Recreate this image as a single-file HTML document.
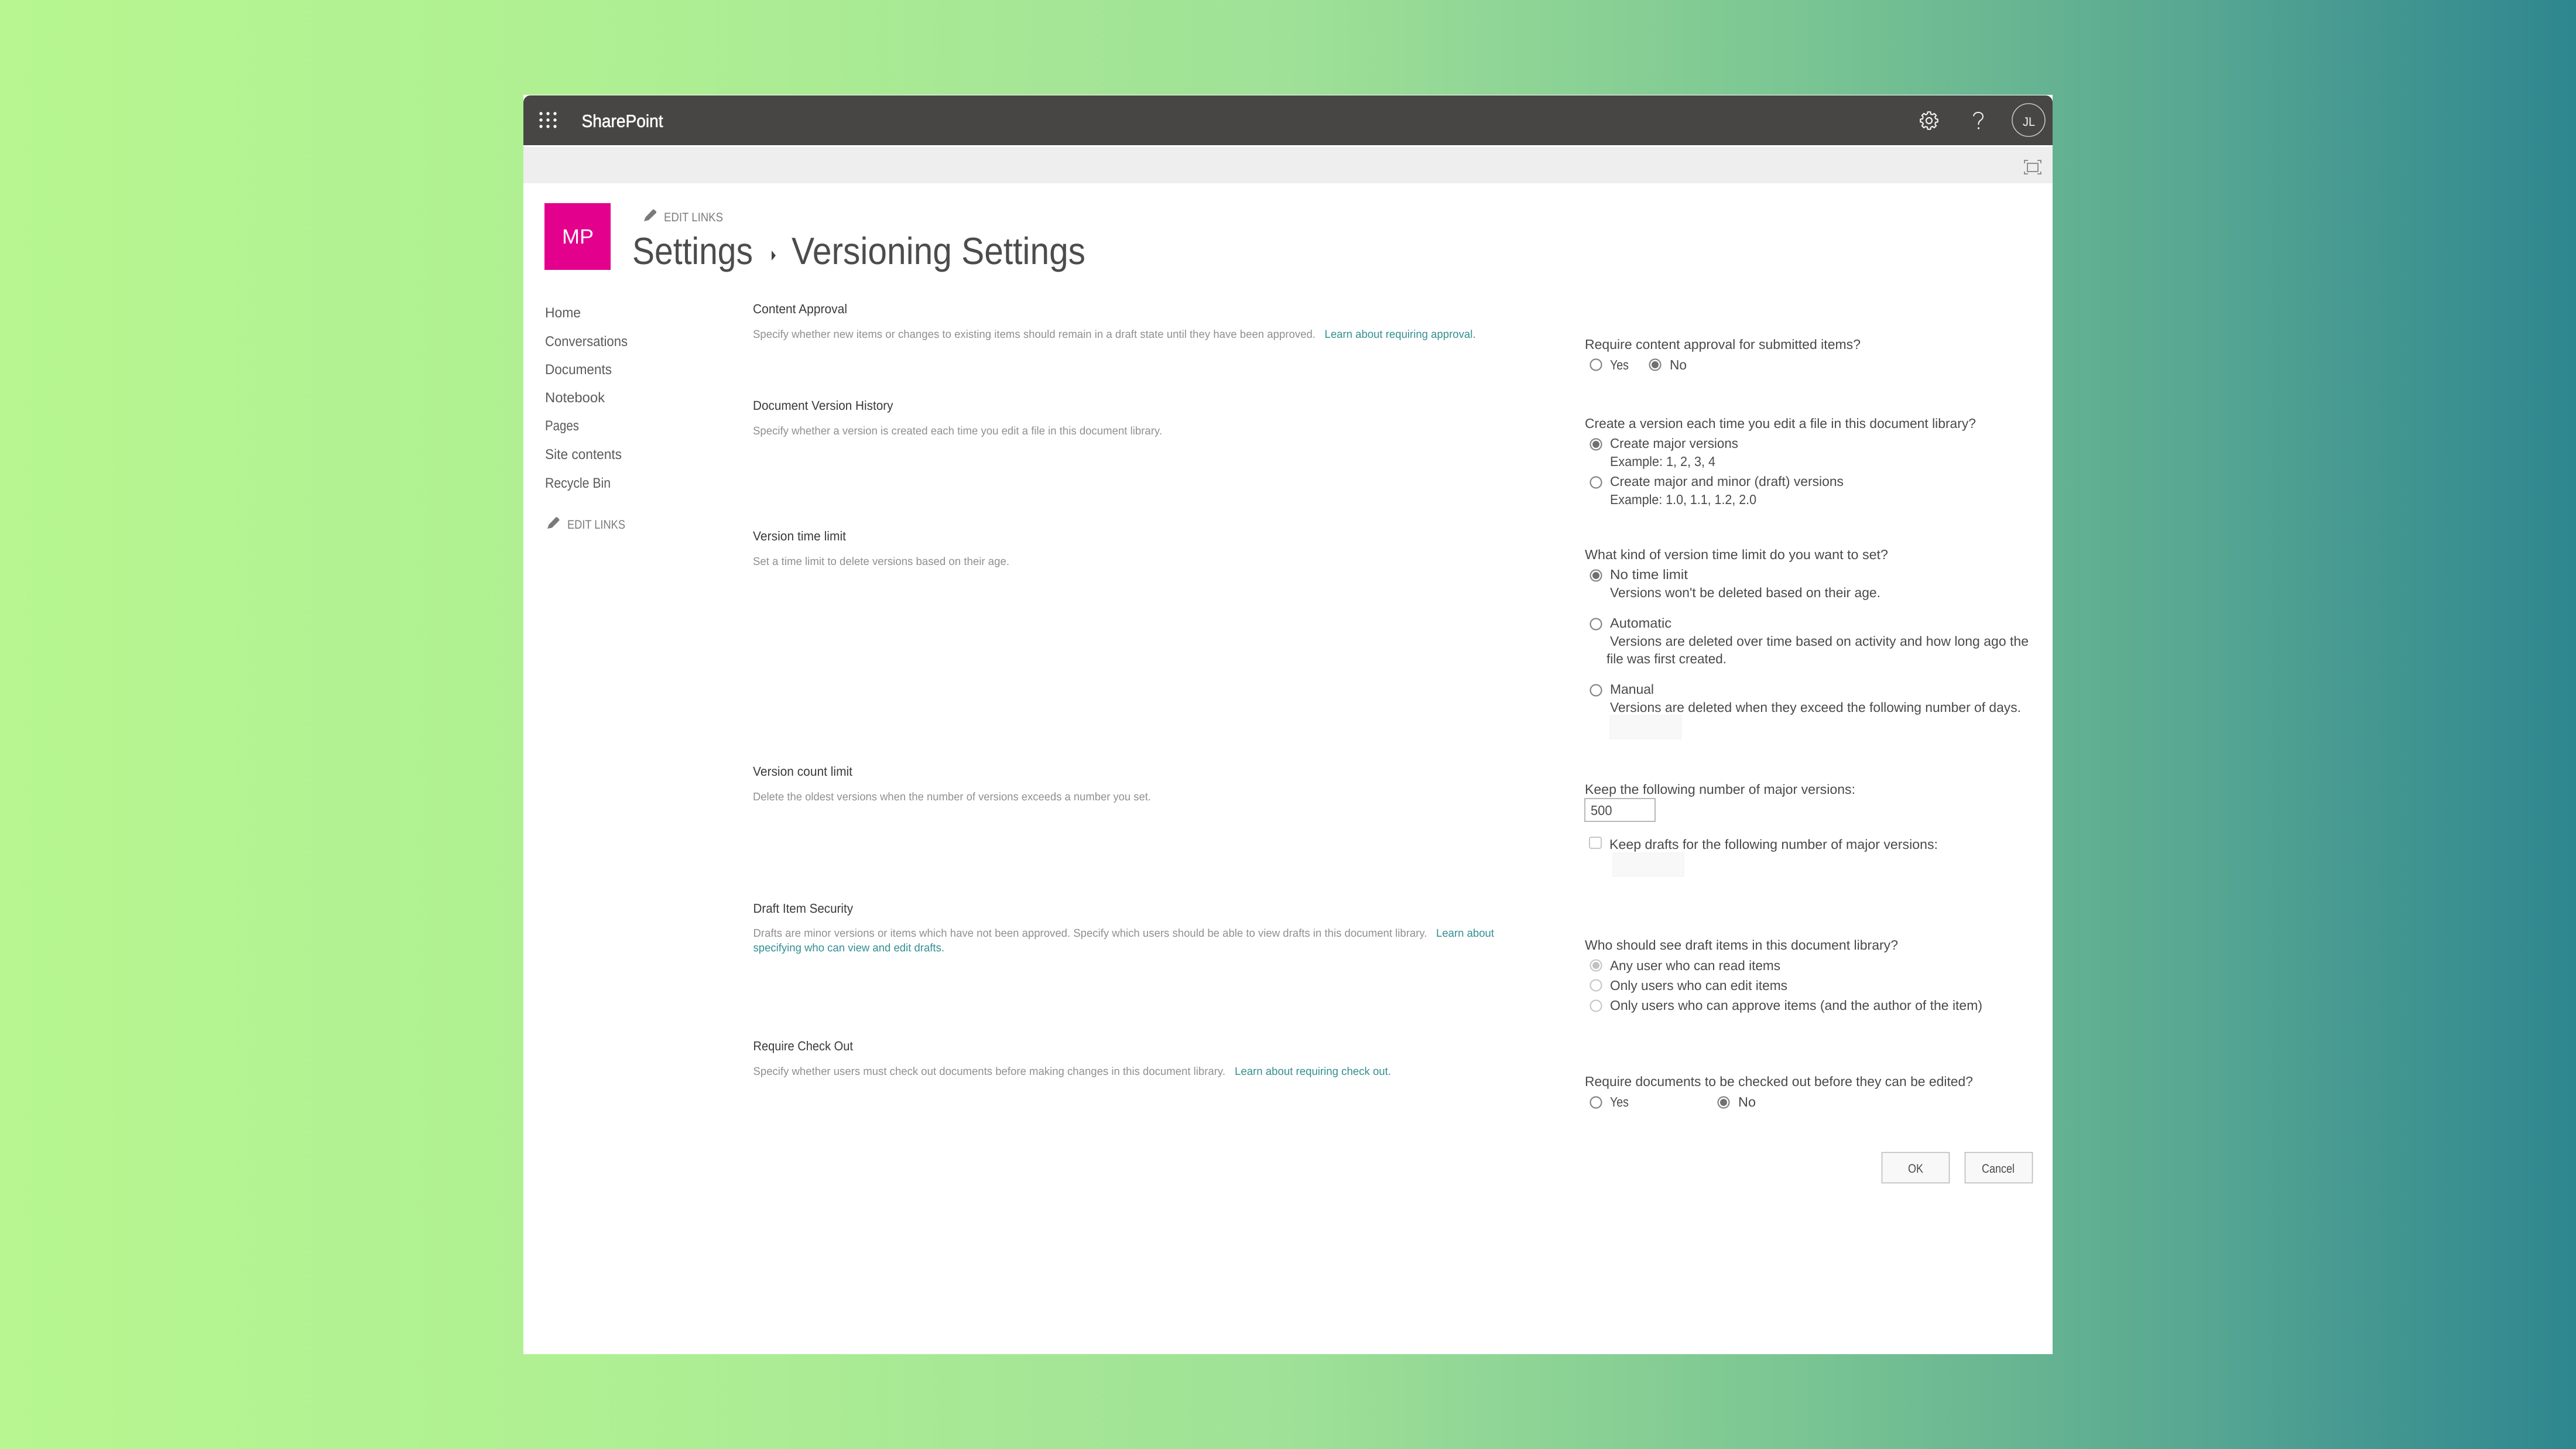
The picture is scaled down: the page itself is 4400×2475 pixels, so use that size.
<!DOCTYPE html>
<html lang="en"><head><meta charset="utf-8"><title>Versioning Settings</title>
<style>
html,body{margin:0;padding:0;width:4400px;height:2475px;overflow:hidden;background:#b7f690}
svg{display:block;position:absolute;left:0;top:0}
text{font-family:"Liberation Sans",sans-serif;text-rendering:geometricPrecision}
.n{font-size:24px;fill:#5a5a5a}
.h{font-size:22px;fill:#3a3a3a}
.d{font-size:19px;fill:#909090}
.l{font-size:19px;fill:#338f92}
.r{font-size:23px;fill:#4a4a4a}
.e{font-size:21px;fill:#7c7c7c}
.ro{fill:#fff;stroke:#858585;stroke-width:2.2}
.rd{fill:#fff;stroke:#c8c8c8;stroke-width:2.2}
.c{fill:#707070}
</style></head><body>
<svg width="4400" height="2475" viewBox="0 0 4400 2475" xmlns="http://www.w3.org/2000/svg">
<defs><linearGradient id="bg" x1="0" y1="0" x2="1" y2="0">
<stop offset="0" stop-color="#b7f690"/><stop offset=".25" stop-color="#aeef93"/><stop offset=".5" stop-color="#9fe197"/><stop offset=".7" stop-color="#7ac593"/><stop offset=".85" stop-color="#58a892"/><stop offset="1" stop-color="#2e868f"/>
</linearGradient></defs>
<rect width="4400" height="2475" fill="url(#bg)"/>
<rect x="894" y="162" width="2612" height="2151" fill="#fff"/>
<path d="M906 163H3494a12 12 0 0 1 12 12V248H894V175a12 12 0 0 1 12-12Z" fill="#484644"/>
<rect x="894" y="251" width="2612" height="62" fill="#eeeeee"/>

<!-- waffle -->
<g fill="#fff"><circle cx="924" cy="194" r="2.700"/><circle cx="936" cy="194" r="2.700"/><circle cx="948" cy="194" r="2.700"/><circle cx="924" cy="205" r="2.700"/><circle cx="936" cy="205" r="2.700"/><circle cx="948" cy="205" r="2.700"/><circle cx="924" cy="216" r="2.700"/><circle cx="936" cy="216" r="2.700"/><circle cx="948" cy="216" r="2.700"/></g>
<text x="993.5" y="217" font-size="30" fill="#fff" stroke="#fff" stroke-width=".6" textLength="139" lengthAdjust="spacingAndGlyphs">SharePoint</text>

<!-- gear -->
<g transform="translate(3295 206)" fill="none" stroke="#f2f2f2" stroke-width="2.200" stroke-linejoin="round">
<circle r="5"/>
<path d="M-2.98-11.1L-2.35-14.8H2.35L2.98-11.1A11.5 11.5 0 0 1 5.74-9.96"/>
<path transform="rotate(45)" d="M-2.98-11.1L-2.35-14.8H2.35L2.98-11.1A11.5 11.5 0 0 1 5.74-9.96"/>
<path transform="rotate(90)" d="M-2.98-11.1L-2.35-14.8H2.35L2.98-11.1A11.5 11.5 0 0 1 5.74-9.96"/>
<path transform="rotate(135)" d="M-2.98-11.1L-2.35-14.8H2.35L2.98-11.1A11.5 11.5 0 0 1 5.74-9.96"/>
<path transform="rotate(180)" d="M-2.98-11.1L-2.35-14.8H2.35L2.98-11.1A11.5 11.5 0 0 1 5.74-9.96"/>
<path transform="rotate(225)" d="M-2.98-11.1L-2.35-14.8H2.35L2.98-11.1A11.5 11.5 0 0 1 5.74-9.96"/>
<path transform="rotate(270)" d="M-2.98-11.1L-2.35-14.8H2.35L2.98-11.1A11.5 11.5 0 0 1 5.74-9.96"/>
<path transform="rotate(315)" d="M-2.98-11.1L-2.35-14.8H2.35L2.98-11.1A11.5 11.5 0 0 1 5.74-9.96"/>
</g>
<!-- help -->
<path d="M3371 198.5c.6-4.2 4-6.5 8-6.5 4.700 0 8 3 8 7 0 3.200-1.800 5-4 6.500-2.200 1.500-3.500 3-3.500 6v1.500" fill="none" stroke="#f2f2f2" stroke-width="2"/>
<circle cx="3379.500" cy="219" r="1.600" fill="#f2f2f2"/>
<!-- avatar -->
<circle cx="3465" cy="205" r="28" fill="none" stroke="#c4c4c4" stroke-width="1.600"/>
<text x="3455" y="215" font-size="21" fill="#f4f4f4" textLength="21" lengthAdjust="spacingAndGlyphs">JL</text>
<!-- focus icon -->
<g fill="none" stroke="#8f8f8f" stroke-width="2"><rect x="3463" y="279" width="18" height="14"/><path d="M3458 279v-5h6M3480 274h6v5M3486 293v4h-6M3464 297h-6v-4"/></g>

<!-- logo -->
<rect x="930" y="347" width="113" height="114" fill="#e3008c"/>
<text x="960" y="416" font-size="35" fill="#fff" textLength="54" lengthAdjust="spacingAndGlyphs">MP</text>

<!-- top edit links -->
<path d="M1100 378l2.500-7 12-12.500c1-1 2.500-1 3.500 0l2.500 2.500c1 1 .8 2.200 0 3l-12.500 12Z" fill="#7a7a7a"/>
<text x="1134" y="378" class="e" textLength="101" lengthAdjust="spacingAndGlyphs">EDIT LINKS</text>

<!-- title -->
<g font-size="65" fill="#4c4c4c">
<text x="1080" y="451" textLength="206" lengthAdjust="spacingAndGlyphs">Settings</text>
<text x="1352" y="451" textLength="502" lengthAdjust="spacingAndGlyphs">Versioning Settings</text>
</g>
<path d="M1318 428l7 8.500-7 8.500Z" fill="#444"/>

<!-- nav -->
<text x="931" y="542" class="n" textLength="61" lengthAdjust="spacingAndGlyphs">Home</text>
<text x="931" y="591" class="n" textLength="141" lengthAdjust="spacingAndGlyphs">Conversations</text>
<text x="931" y="639" class="n" textLength="114" lengthAdjust="spacingAndGlyphs">Documents</text>
<text x="931" y="687" class="n" textLength="102" lengthAdjust="spacingAndGlyphs">Notebook</text>
<text x="931" y="735" class="n" textLength="58" lengthAdjust="spacingAndGlyphs">Pages</text>
<text x="931" y="784" class="n" textLength="131" lengthAdjust="spacingAndGlyphs">Site contents</text>
<text x="931" y="833" class="n" textLength="112" lengthAdjust="spacingAndGlyphs">Recycle Bin</text>
<path d="M935 903l2.500-7 11.500-12c1-1 2.300-1 3.300 0l2.500 2.500c1 1 .8 2.200 0 3l-12 12Z" fill="#7a7a7a"/>
<text x="969" y="903" class="e" textLength="99" lengthAdjust="spacingAndGlyphs">EDIT LINKS</text>

<!-- left sections -->
<text x="1286" y="535" class="h" textLength="161" lengthAdjust="spacingAndGlyphs">Content Approval</text>
<text x="1286" y="577" class="d" textLength="961" lengthAdjust="spacingAndGlyphs">Specify whether new items or changes to existing items should remain in a draft state until they have been approved.</text>
<text x="2262.500" y="577" class="l" textLength="258" lengthAdjust="spacingAndGlyphs">Learn about requiring approval.</text>

<text x="1286" y="700" class="h" textLength="239.500" lengthAdjust="spacingAndGlyphs">Document Version History</text>
<text x="1286" y="742" class="d" textLength="699" lengthAdjust="spacingAndGlyphs">Specify whether a version is created each time you edit a file in this document library.</text>

<text x="1286" y="923" class="h" textLength="159" lengthAdjust="spacingAndGlyphs">Version time limit</text>
<text x="1286" y="965" class="d" textLength="438" lengthAdjust="spacingAndGlyphs">Set a time limit to delete versions based on their age.</text>

<text x="1286" y="1325" class="h" textLength="170" lengthAdjust="spacingAndGlyphs">Version count limit</text>
<text x="1286" y="1367" class="d" textLength="680" lengthAdjust="spacingAndGlyphs">Delete the oldest versions when the number of versions exceeds a number you set.</text>

<text x="1286.500" y="1559" class="h" textLength="170.500" lengthAdjust="spacingAndGlyphs">Draft Item Security</text>
<text x="1286.500" y="1600" class="d" textLength="1151" lengthAdjust="spacingAndGlyphs">Drafts are minor versions or items which have not been approved. Specify which users should be able to view drafts in this document library.</text>
<text x="2453" y="1600" class="l" textLength="99" lengthAdjust="spacingAndGlyphs">Learn about</text>
<text x="1286.500" y="1625" class="l" textLength="326.500" lengthAdjust="spacingAndGlyphs">specifying who can view and edit drafts.</text>

<text x="1286.500" y="1794" class="h" textLength="170.500" lengthAdjust="spacingAndGlyphs">Require Check Out</text>
<text x="1286.500" y="1836" class="d" textLength="806.500" lengthAdjust="spacingAndGlyphs">Specify whether users must check out documents before making changes in this document library.</text>
<text x="2109" y="1836" class="l" textLength="267" lengthAdjust="spacingAndGlyphs">Learn about requiring check out.</text>

<!-- right column -->
<text x="2707" y="596" class="r" textLength="471" lengthAdjust="spacingAndGlyphs">Require content approval for submitted items?</text>
<circle class="ro" cx="2726" cy="623" r="9.500"/><text x="2750" y="631" class="r" textLength="32" lengthAdjust="spacingAndGlyphs">Yes</text>
<circle class="ro" cx="2827" cy="623" r="9.500"/><circle class="c" cx="2827" cy="623" r="6"/><text x="2852" y="631" class="r" textLength="29" lengthAdjust="spacingAndGlyphs">No</text>

<text x="2707" y="731" class="r" textLength="668" lengthAdjust="spacingAndGlyphs">Create a version each time you edit a file in this document library?</text>
<circle class="ro" cx="2726" cy="759" r="9.500"/><circle class="c" cx="2726" cy="759" r="6"/>
<text x="2750" y="765" class="r" textLength="219" lengthAdjust="spacingAndGlyphs">Create major versions</text>
<text x="2750" y="796" class="r" textLength="180" lengthAdjust="spacingAndGlyphs">Example: 1, 2, 3, 4</text>
<circle class="ro" cx="2726" cy="824" r="9.500"/>
<text x="2750" y="830" class="r" textLength="399" lengthAdjust="spacingAndGlyphs">Create major and minor (draft) versions</text>
<text x="2750" y="861" class="r" textLength="250" lengthAdjust="spacingAndGlyphs">Example: 1.0, 1.1, 1.2, 2.0</text>

<text x="2707" y="955" class="r" textLength="518" lengthAdjust="spacingAndGlyphs">What kind of version time limit do you want to set?</text>
<circle class="ro" cx="2726" cy="983" r="9.500"/><circle class="c" cx="2726" cy="983" r="6"/>
<text x="2750" y="989" class="r" textLength="133" lengthAdjust="spacingAndGlyphs">No time limit</text>
<text x="2750" y="1020" class="r" textLength="462" lengthAdjust="spacingAndGlyphs">Versions won't be deleted based on their age.</text>
<circle class="ro" cx="2726" cy="1066" r="9.500"/>
<text x="2750" y="1072" class="r" textLength="105" lengthAdjust="spacingAndGlyphs">Automatic</text>
<text x="2750" y="1103" class="r" textLength="715" lengthAdjust="spacingAndGlyphs">Versions are deleted over time based on activity and how long ago the</text>
<text x="2744" y="1133" class="r" textLength="205" lengthAdjust="spacingAndGlyphs">file was first created.</text>
<circle class="ro" cx="2726" cy="1179" r="9.500"/>
<text x="2750" y="1185" class="r" textLength="75" lengthAdjust="spacingAndGlyphs">Manual</text>
<text x="2750" y="1216" class="r" textLength="702" lengthAdjust="spacingAndGlyphs">Versions are deleted when they exceed the following number of days.</text>
<rect x="2750" y="1222" width="122" height="40" fill="#f8f8f8" stroke="#f0f0f0"/>

<text x="2707" y="1356" class="r" textLength="462" lengthAdjust="spacingAndGlyphs">Keep the following number of major versions:</text>
<rect x="2707" y="1364" width="120" height="39" fill="#fff" stroke="#a6a6a6" stroke-width="1.600"/>
<text x="2717" y="1392" class="r" textLength="36.500" lengthAdjust="spacingAndGlyphs">500</text>
<rect x="2715" y="1430" width="20" height="19" rx="3" fill="#fff" stroke="#c6c6c6" stroke-width="2"/>
<text x="2749" y="1450" class="r" textLength="561" lengthAdjust="spacingAndGlyphs">Keep drafts for the following number of major versions:</text>
<rect x="2755" y="1457" width="121" height="40" fill="#f8f8f8" stroke="#f0f0f0"/>

<text x="2707" y="1622" class="r" textLength="535" lengthAdjust="spacingAndGlyphs">Who should see draft items in this document library?</text>
<circle class="rd" cx="2726" cy="1649" r="9.500"/><circle cx="2726" cy="1649" r="6" fill="#c2c2c2"/>
<text x="2750" y="1657" class="r" textLength="291" lengthAdjust="spacingAndGlyphs">Any user who can read items</text>
<circle class="rd" cx="2726" cy="1683" r="9.500"/>
<text x="2750" y="1691" class="r" textLength="303" lengthAdjust="spacingAndGlyphs">Only users who can edit items</text>
<circle class="rd" cx="2726" cy="1718" r="9.500"/>
<text x="2750" y="1725" class="r" textLength="636" lengthAdjust="spacingAndGlyphs">Only users who can approve items (and the author of the item)</text>

<text x="2707" y="1855" class="r" textLength="663" lengthAdjust="spacingAndGlyphs">Require documents to be checked out before they can be edited?</text>
<circle class="ro" cx="2726" cy="1883" r="9.500"/><text x="2750" y="1890" class="r" textLength="32" lengthAdjust="spacingAndGlyphs">Yes</text>
<circle class="ro" cx="2944" cy="1883" r="9.500"/><circle class="c" cx="2944" cy="1883" r="6"/><text x="2969" y="1890" class="r" textLength="30" lengthAdjust="spacingAndGlyphs">No</text>

<rect x="3214.500" y="1968.500" width="115" height="52" fill="#f8f8f8" stroke="#b8b8b8" stroke-width="1.500"/>
<text x="3259" y="2003" font-size="21" fill="#4a4a4a" textLength="26" lengthAdjust="spacingAndGlyphs">OK</text>
<rect x="3356.500" y="1968.500" width="115" height="52" fill="#f8f8f8" stroke="#b8b8b8" stroke-width="1.500"/>
<text x="3385" y="2003" font-size="21" fill="#4a4a4a" textLength="56" lengthAdjust="spacingAndGlyphs">Cancel</text>
</svg>
</body></html>
